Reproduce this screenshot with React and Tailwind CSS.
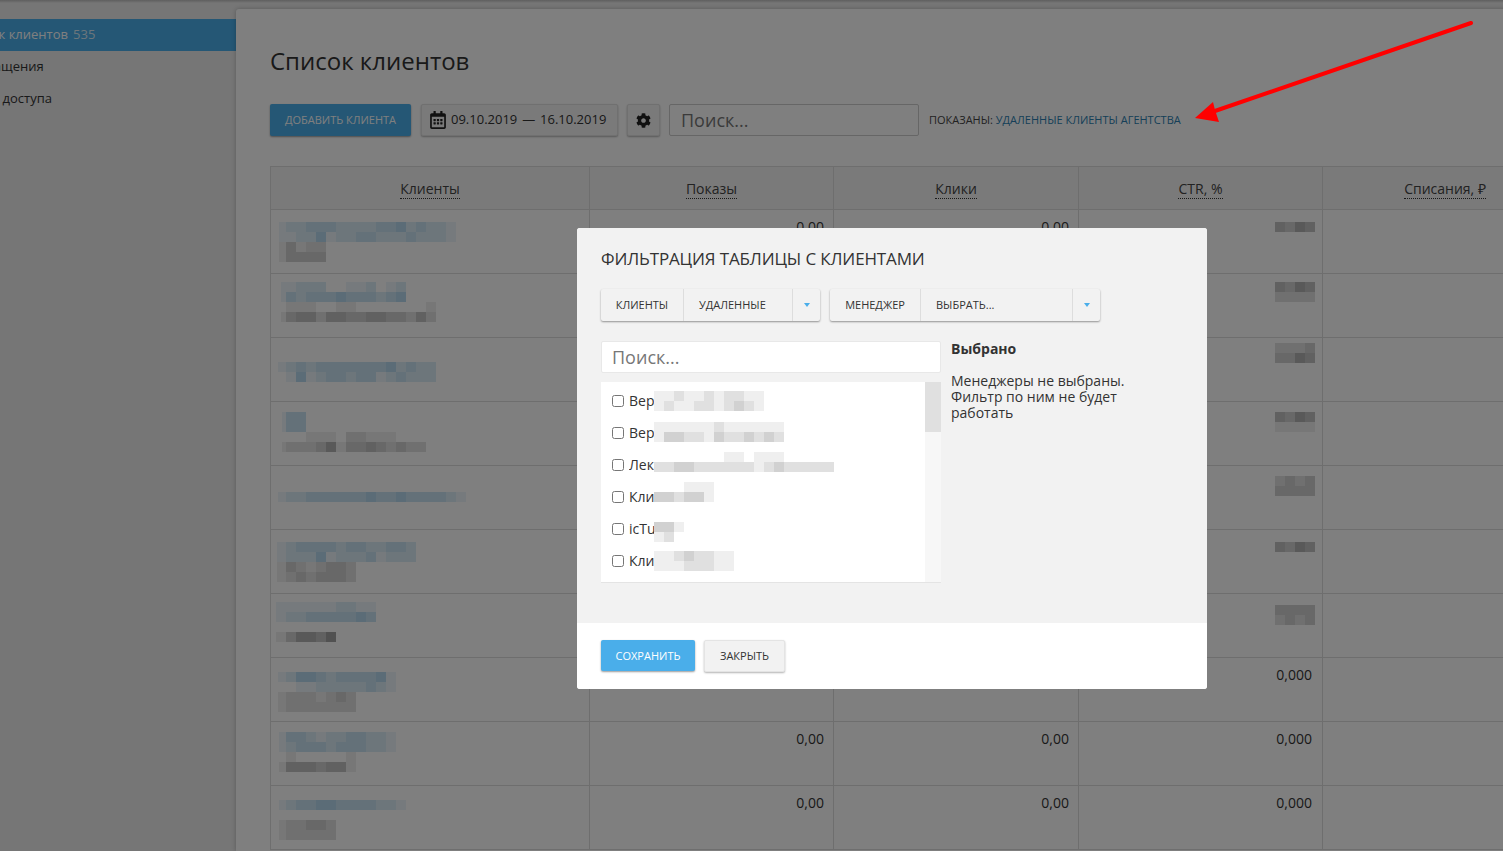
import { FaRegCalendarAlt, FaCog } from "react-icons/fa";

const BLUE = "74,160,216";
const GRAY = "102,102,102";

// blurred blocks: every digit is one 10px cell, digit/10 is its opacity
function Strip({ color, cells, first = 10 }) {
  return (
    <div className="flex h-[10px]">
      {cells.split("").map((d, i) => (
        <div
          key={i}
          className="h-full shrink-0"
          style={{
            width: i === 0 ? first : 10,
            backgroundColor: `rgba(${color},${Number(d) / 10})`,
          }}
        />
      ))}
    </div>
  );
}

const rows = [
  { x: 8, top: 12, lines: [["b", "122333222233423221"], ["b", "112241223322232221"], ["g", "13122"], ["g", "13333"]], ctr: { top: 12, lines: ["4354"] } },
  { x: 10, top: 8, lines: [["b", "1122200112012"], ["b", "1323334333234"], ["g", "0111001100000001"], ["g", "1344244334433242"]], ctr: { top: 8, lines: ["4354", "2222"] } },
  { x: 7, top: 24, lines: [["b", "1232333333342322"], ["b", "0141233233123222"]], ctr: { top: 5, lines: ["2223", "3354"] } },
  { x: 11, top: 10, lines: [["b", "133"], ["b", "133"], ["g", "000111022111000"], ["g", "122235133432322"]], ctr: { top: 10, lines: ["4354", "1111"] } },
  { x: 7, top: 26, lines: [["b", "1223333334334333321"]], ctr: { top: 10, lines: ["2323", "3333"] } },
  { x: 6, top: 12, lines: [["b", "12333323322332"], ["b", "12224122231222"], ["g", "13212332"], ["g", "12323332"]], ctr: { top: 12, lines: ["4354"] } },
  { x: 5, top: 8, lines: [["b", "1111112211"], ["b", "1223333343"], ["g", "0"], ["g", "135546"]], ctr: { top: 11, lines: ["3333", "2323"] } },
  { x: 7, top: 14, lines: [["b", "124432333341"], ["b", "001122222321"], ["g", "12221232"], ["g", "12222222"]], value: "0,000" },
  { x: 8, top: 10, lines: [["b", "133212233221"], ["b", "123332333221"], ["g", "01000001"], ["g", "14443441"]], value: "0,00", click: "0,00", ctrValue: "0,000" },
  { x: 8, top: 14, lines: [["b", "1233443333221"], ["g", "0"], ["g", "122332"], ["g", "122222"]], value: "0,00", click: "0,00", ctrValue: "0,000" },
];

const items = [
  { label: "Верт", mt: 0, lines: ["11211212211", "12112212321"] },
  { label: "Вер", mt: -2, lines: ["1111112111111", "1332213223232"] },
  { label: "Лек", mt: -6, lines: ["000000011011100000", "223322222212322222"] },
  { label: "Кли", mt: -10, lines: ["000111", "332331"] },
  { label: "icTu", mt: 6, lines: ["331", "120"] },
  { label: "Кли", mt: 0, lines: ["11232211", "11122211"] },
];

function Header({ children }) {
  return (
    <th className="h-[43px] border border-[#dddddd] bg-[#f5f5f5] text-center text-[14px] font-normal text-[#444]">
      <span className="border-b border-dotted border-[#333]">{children}</span>
    </th>
  );
}

function Caret() {
  return <span className="block h-0 w-0 border-x-[3px] border-t-[4px] border-x-transparent border-t-[#4aaeea]" />;
}

function Group({ label, value, valueWidth, labelWidth }) {
  return (
    <div className="flex h-[32px] rounded-[2px] bg-[#f2f2f2] text-[11px] uppercase text-[#333] shadow-[0_1px_2px_rgba(0,0,0,0.4)]">
      <div className={`flex items-center justify-center border-r border-[#dddddd] ${labelWidth}`}>{label}</div>
      <div className={`flex items-center border-r border-[#dddddd] pl-[15px] ${valueWidth}`}>{value}</div>
      <div className="flex w-[27px] items-center justify-center">
        <Caret />
      </div>
    </div>
  );
}

export default function App() {
  return (
    <div className="relative flex h-[851px] w-full overflow-hidden bg-[#ececec] font-['Open_Sans',sans-serif] text-[#333]">
      <aside className="w-[236px] shrink-0 overflow-hidden pt-[19px] text-[13px]">
        <div className="flex h-[32px] items-center whitespace-nowrap bg-[#4aaeea] text-white">
          <span className="-ml-[40px]">Список клиентов</span>
          <span className="ml-[5px] text-[#d8ecf8]">535</span>
        </div>
        <div className="flex h-[32px] items-center whitespace-nowrap">
          <span className="-ml-[32px]">Обращения</span>
        </div>
        <div className="flex h-[32px] items-center whitespace-nowrap">
          <span className="-ml-[69px]">Настройки доступа</span>
        </div>
      </aside>

      <main className="mt-[9px] flex-1 rounded-tl-[3px] bg-white pl-[34px] pt-[36px] shadow-[0_0_4px_rgba(0,0,0,0.25)]">
        <h1 className="mb-[27px] h-[32px] text-[24px] leading-[32px] text-[#333]">Список клиентов</h1>

        <div className="mb-[30px] flex h-[32px] items-center whitespace-nowrap">
          <button className="h-[32px] w-[141px] rounded-[2px] bg-[#4aaeea] text-[11px] uppercase text-white shadow-[0_1px_2px_rgba(0,0,0,0.4)]">
            Добавить клиента
          </button>
          <button className="ml-[10px] flex h-[32px] w-[197px] items-center rounded-[2px] border border-[#e0e0e0] bg-[#f5f5f5] pl-[7px] text-[13px] shadow-[0_1px_2px_rgba(0,0,0,0.3)]">
            <FaRegCalendarAlt className="text-[18px] text-[#222]" />
            <span className="ml-[4px]">
              09.10.2019 <span className="mx-[1.5px]">—</span> 16.10.2019
            </span>
          </button>
          <button className="ml-[9px] flex h-[32px] w-[33px] items-center justify-center rounded-[2px] border border-[#e0e0e0] bg-[#f5f5f5] shadow-[0_1px_2px_rgba(0,0,0,0.3)]">
            <FaCog className="text-[15px] text-[#222]" />
          </button>
          <div className="ml-[9px] flex h-[32px] w-[250px] items-center rounded-[2px] border border-[#cccccc] pl-[11px] text-[18px] text-[#777]">
            Поиск...
          </div>
          <div className="ml-[10px] text-[11px] uppercase text-[#444]">
            Показаны: <span className="text-[#2c7fb0]">Удаленные клиенты агентства</span>
          </div>
        </div>

        <table className="w-[1297px] table-fixed border-collapse text-[14px]">
          <colgroup>
            <col className="w-[319px]" />
            <col className="w-[244px]" />
            <col className="w-[245px]" />
            <col className="w-[244px]" />
            <col className="w-[245px]" />
          </colgroup>
          <thead>
            <tr>
              <Header>Клиенты</Header>
              <Header>Показы</Header>
              <Header>Клики</Header>
              <Header>CTR, %</Header>
              <Header>Списания, ₽</Header>
            </tr>
          </thead>
          <tbody>
            {rows.map((row, i) => (
              <tr key={i} className="h-[64px]">
                <td className="border border-[#dddddd] p-0 align-top">
                  <div className="h-[63px] overflow-hidden" style={{ paddingTop: row.top, paddingLeft: row.x }}>
                    {row.lines.map((line, j) => (
                      <Strip
                        key={j}
                        color={line[0] === "b" ? BLUE : GRAY}
                        cells={line[1]}
                        first={10 - ((row.x + 270 - 275) % 10)}
                      />
                    ))}
                  </div>
                </td>
                <td className="border border-[#dddddd] pr-[9px] pt-[6px] text-right align-top">{row.click || "0,00"}</td>
                <td className="border border-[#dddddd] pr-[9px] pt-[6px] text-right align-top">{row.click || "0,00"}</td>
                <td className="border border-[#dddddd] px-[10px] pt-[6px] text-right align-top">
                  {row.ctr ? (
                    <div className="-mr-[3px] -mt-[6px] flex flex-col items-end" style={{ paddingTop: row.ctr.top }}>
                      {row.ctr.lines.map((c, j) => (
                        <Strip key={j} color={GRAY} cells={c} />
                      ))}
                    </div>
                  ) : (
                    row.ctrValue || row.value
                  )}
                </td>
                <td className="border border-[#dddddd]" />
              </tr>
            ))}
          </tbody>
        </table>
      </main>

      {/* overlay */}
      <div className="absolute inset-0 bg-black/50" />
      <div className="absolute inset-x-0 top-0 h-[3px] bg-gradient-to-b from-black/20 to-transparent" />

      {/* modal */}
      <div className="absolute left-[577px] top-[228px] flex h-[461px] w-[630px] flex-col overflow-hidden rounded-[3px] bg-white">
        <div className="h-[395px] bg-[#f2f2f2] px-[24px] pt-[19px]">
          <h2 className="h-[24px] text-[17px] uppercase leading-[24px] tracking-[-0.13px] text-[#333]">
            Фильтрация таблицы с клиентами
          </h2>
          <div className="mt-[18px] flex gap-[10px]">
            <Group label="Клиенты" value="Удаленные" labelWidth="w-[83px]" valueWidth="w-[109px]" />
            <Group label="Менеджер" value="Выбрать..." labelWidth="w-[91px]" valueWidth="w-[152px]" />
          </div>
          <div className="mt-[20px] flex">
            <div className="w-[340px]">
              <div className="flex h-[32px] items-center rounded-[2px] border border-[#e8e8e8] bg-white pl-[10px] text-[18px] text-[#777]">
                Поиск...
              </div>
              <div className="mt-[9px] flex h-[201px] border-b border-[#e4e4e4] bg-white">
                <div className="flex-1 overflow-hidden pt-[3px]">
                  {items.map((item, i) => (
                    <div key={i} className="flex h-[32px] items-center pl-[11px]">
                      <input type="checkbox" readOnly className="m-0 h-[12px] w-[12px]" />
                      <span className="ml-[5px] w-[25px] overflow-hidden whitespace-nowrap pb-[2px] text-[14px]">{item.label}</span>
                      <div className="bg-white" style={{ marginTop: item.mt }}>
                        {item.lines.map((c, j) => (
                          <Strip key={j} color={GRAY} cells={c} />
                        ))}
                      </div>
                    </div>
                  ))}
                </div>
                <div className="w-[16px] bg-[#f7f7f7]">
                  <div className="h-[50px] bg-[#e0e0e0]" />
                </div>
              </div>
            </div>
            <div className="ml-[10px] w-[180px] text-[14px] leading-[16px]">
              <div className="font-bold">Выбрано</div>
              <p className="mt-[16px]">Менеджеры не выбраны. Фильтр по ним не будет работать</p>
            </div>
          </div>
        </div>
        <div className="flex flex-1 items-start gap-[9px] bg-white pl-[24px] pt-[17px] text-[11px] uppercase">
          <button className="h-[31px] w-[94px] rounded-[2px] bg-[#4aaeea] pt-[1px] uppercase text-white shadow-[0_1px_2px_rgba(0,0,0,0.4)]">
            Сохранить
          </button>
          <button className="h-[32px] w-[81px] rounded-[2px] border border-[#e4e4e4] bg-[#f2f2f2] uppercase text-[#333] shadow-[0_1px_2px_rgba(0,0,0,0.3)]">
            Закрыть
          </button>
        </div>
      </div>

      {/* red arrow drawn on the screenshot */}
      <svg className="absolute inset-0 h-[851px] w-[1503px]" viewBox="0 0 1503 851" fill="none">
        <path d="M1471 23L1212 112" stroke="#ff0000" strokeWidth="4" strokeLinecap="round" />
        <path d="M1195 118L1213 102L1215 110L1219 122Z" fill="#ff0000" />
      </svg>
    </div>
  );
}
